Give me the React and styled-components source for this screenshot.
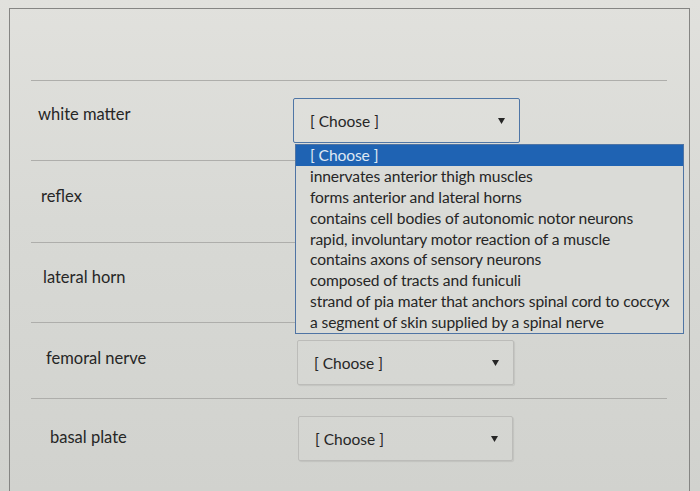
import React from 'react';
import styled, { createGlobalStyle } from 'styled-components';

const GlobalStyle = createGlobalStyle`
    html, body {
        margin: 0;
        padding: 0;
    }
    body {
        width: 700px;
        height: 491px;
        overflow: hidden;
        background: linear-gradient(180deg, #e1e1dd 0%, #d8d9d5 45%, #d1d2ce 100%);
        font-family: Lato, "Open Sans", "Liberation Sans", sans-serif;
        color: #262626;
    }
`;

const options = [
    "innervates anterior thigh muscles",
    "forms anterior and lateral horns",
    "contains cell bodies of autonomic notor neurons",
    "rapid, involuntary motor reaction of a muscle",
    "contains axons of sensory neurons",
    "composed of tracts and funiculi",
    "strand of pia mater that anchors spinal cord to coccyx",
    "a segment of skin supplied by a spinal nerve",
];

// rows 2 and 3 sit under the open list, so their selects are not drawn
const questions = [
    { term: "white matter", indent: 7, open: true, height: 80, labelTop: 23 },
    { term: "reflex", indent: 10, covered: true, height: 82, labelTop: 25 },
    { term: "lateral horn", indent: 12, covered: true, height: 80, labelTop: 24 },
    { term: "femoral nerve", indent: 15, boxShift: 4, boxWidth: 217, height: 76, labelTop: 25 },
    { term: "basal plate", indent: 19, boxShift: 5, boxWidth: 215, height: 80, labelTop: 28 },
];

const Caret = () => (
    <svg width="7" height="6" viewBox="0 0 7 6">
        <path d="M0 0 L7 0 L3.5 6 Z" fill="#262626" />
    </svg>
);

const App = () => {
    return (
        <>
            <GlobalStyle />
            <Frame>
                {questions.map((q) => (
                    <Row key={q.term} h={q.height}>
                        <Term indent={q.indent} top={q.labelTop}>{q.term}</Term>
                        <SelectWrap shift={q.boxShift || 0}>
                            {!q.covered && (
                                <SelectBox focused={q.open} w={q.boxWidth || 227}>
                                    <span>[ Choose ]</span>
                                    <Caret />
                                </SelectBox>
                            )}
                            {q.open && (
                                <OptionList>
                                    <Option selected>[ Choose ]</Option>
                                    {options.map((o) => (
                                        <Option key={o}>{o}</Option>
                                    ))}
                                </OptionList>
                            )}
                        </SelectWrap>
                    </Row>
                ))}
            </Frame>
        </>
    );
};

export default App;

const Frame = styled.div`
    margin: 8px 10px 0 9px;
    height: 483px;
    box-sizing: border-box;
    border-top: 1px solid #858583;
    border-left: 1px solid #858583;
    border-right: 1px solid #858583;
    padding: 71px 22px 0 21px;
`;

const Row = styled.div`
    display: grid;
    grid-template-columns: 262px 1fr;
    height: ${(p) => p.h}px;
    box-sizing: border-box;
    border-top: 1px solid #aeaeab;
`;

const Term = styled.div`
    padding-left: ${(p) => p.indent}px;
    padding-top: ${(p) => p.top}px;
    font-size: 16.5px;
    line-height: 20px;
    color: #262626;
`;

const SelectWrap = styled.div`
    position: relative;
    padding-top: 17px;
    padding-left: ${(p) => p.shift}px;
`;

const SelectBox = styled.div`
    width: ${(p) => p.w}px;
    height: 45px;
    box-sizing: border-box;
    display: flex;
    align-items: center;
    justify-content: space-between;
    padding: 0 14px 0 16px;
    font-size: 15.5px;
    color: #262626;
    border: 1px solid ${(p) => (p.focused ? '#4f76a6' : '#bcbcb9')};
    border-radius: 2px;
    box-shadow: ${(p) => (p.focused ? 'none' : '1px 1px 1px rgba(0,0,0,0.08)')};
    background: rgba(255, 255, 255, 0.06);
`;

const OptionList = styled.div`
    position: absolute;
    top: 63px;
    left: 2px;
    width: 389px;
    box-sizing: border-box;
    border: 1px solid #4f74a4;
    background: #dadbd7;
    z-index: 2;
`;

const Option = styled.div`
    height: 20.9px;
    line-height: 20.9px;
    padding-left: 14px;
    font-size: 15.6px;
    letter-spacing: -0.1px;
    white-space: nowrap;
    color: ${(p) => (p.selected ? '#dfe8f3' : '#262626')};
    background: ${(p) => (p.selected ? '#1f63b3' : 'transparent')};
`;
